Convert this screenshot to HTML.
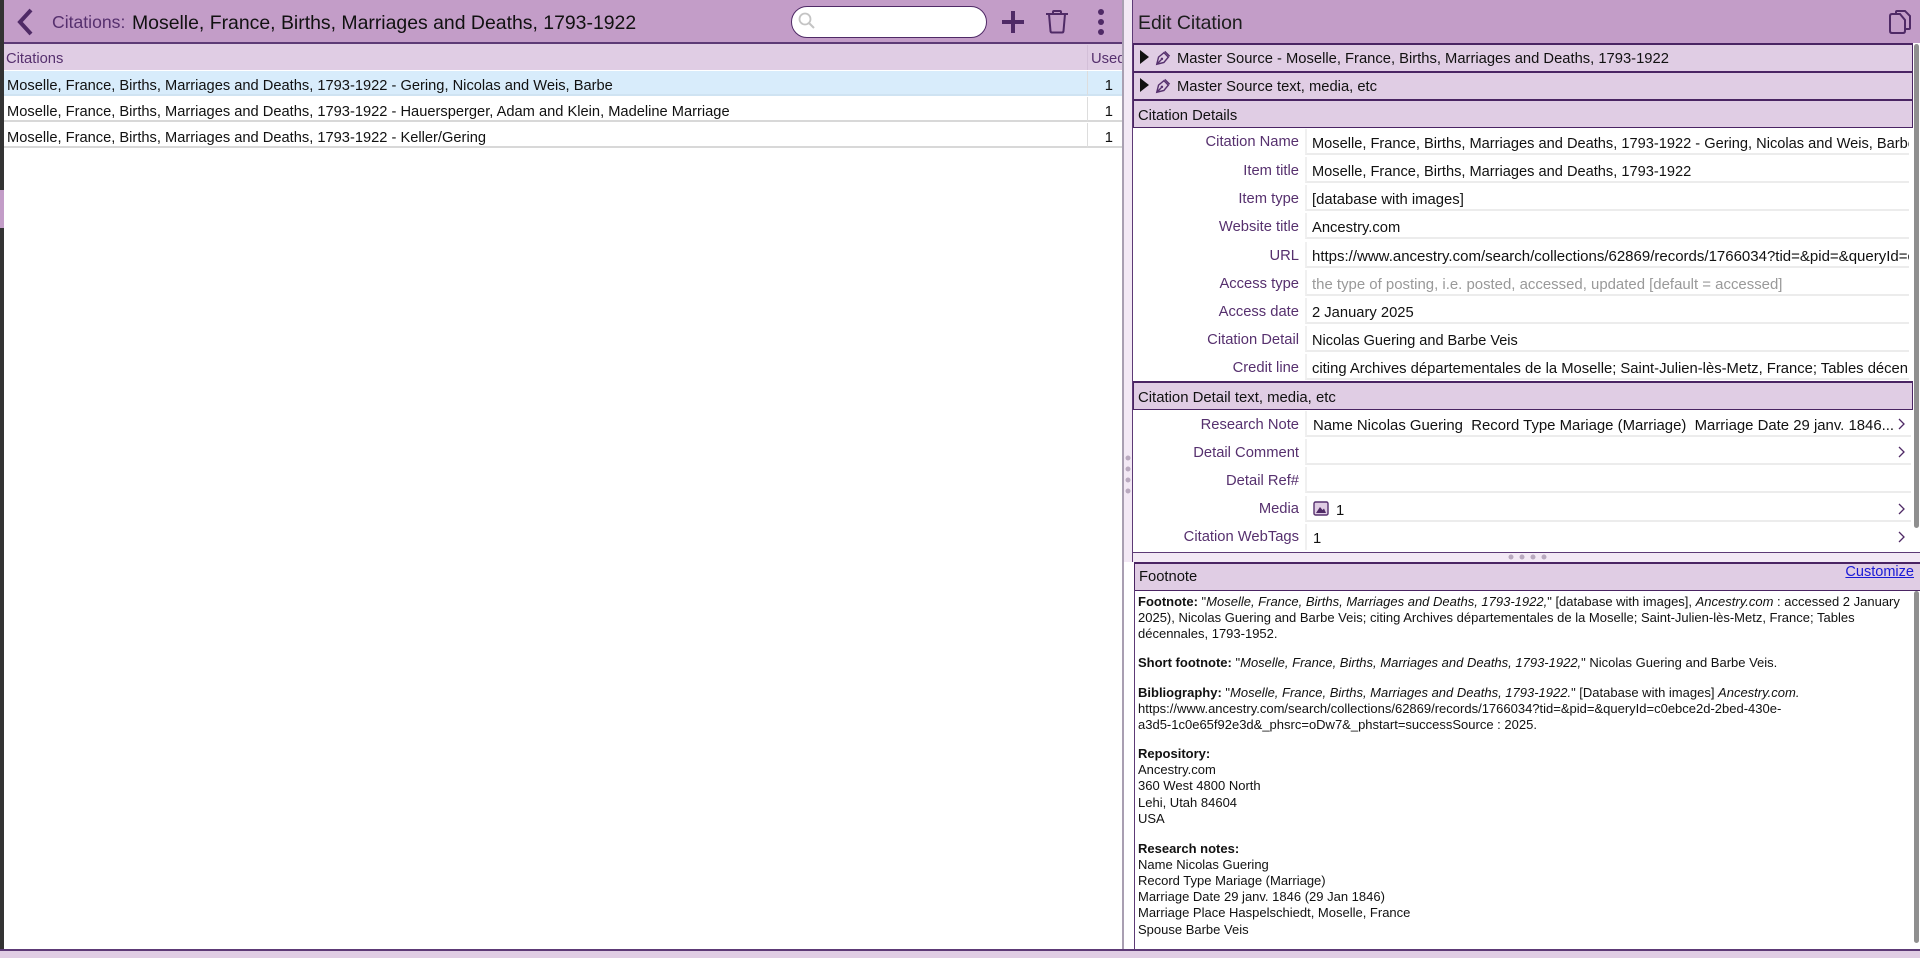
<!DOCTYPE html>
<html><head><meta charset="utf-8"><title>Edit Citation</title>
<style>
html,body{margin:0;padding:0;width:1920px;height:958px;overflow:hidden;background:#fff}
body{position:relative;font-family:"Liberation Sans",sans-serif;font-size:14.75px;color:#111}
div,a,svg,span.a{position:absolute;white-space:nowrap}
.hdr{background:#c39dc8}
.sec{left:1133px;width:778px;height:26px;background:#e0cde4;border:solid #4a2463;border-width:2px 1px 0 1px;line-height:26px;box-sizing:content-box}
.row{left:4px;width:1083px;height:25px;line-height:30px;padding-left:3px;box-sizing:border-box;border-bottom:2px solid #d8d8d8;font-size:14.66px}
.used{left:1087px;width:35px;height:25px;line-height:30px;text-align:right;padding-right:9px;box-sizing:border-box;border-left:1px solid #ddd;border-bottom:2px solid #d8d8d8}
.lab{left:1134px;width:165px;text-align:right;color:#56306e;height:20px;line-height:22px}
.val{left:1305px;width:604px;height:26px;line-height:30px;padding-left:5px;box-sizing:border-box;border-left:2px solid #f0f0f0;border-bottom:2px solid #ececec;overflow:hidden}
.chev{left:1895px;width:12px;height:14px}
.note{left:1138px;font-size:13px;line-height:16.2px;color:#111}
</style></head><body>
<div style="left:0;top:0;width:4px;height:958px;background:#333"></div>
<div style="left:0;top:190px;width:4px;height:38px;background:#c39dc8"></div>

<div class="hdr" style="left:4px;top:0;width:1118px;height:43px"></div>
<div class="hdr" style="left:1133px;top:0;width:787px;height:43px"></div>
<div style="left:4px;top:42px;width:1118px;height:2px;background:#5d3a76"></div>
<div style="left:1122px;top:0;width:2px;height:949px;background:#a99fb2"></div>
<div style="left:1124px;top:0;width:8px;height:562px;background:#f3e9f5"></div>
<div style="left:1132px;top:0;width:1px;height:562px;background:#5d3a76"></div>

<svg style="left:14px;top:8px" width="22" height="28" viewBox="0 0 22 28"><path d="M17 2 L6 14 L17 26" fill="none" stroke="#4f2a66" stroke-width="4"/></svg>
<div style="left:52px;top:10px;font-size:17.6px;line-height:25px;color:#56306e">Citations:</div>
<div style="left:132px;top:9px;font-size:19.43px;line-height:28px;color:#111">Moselle, France, Births, Marriages and Deaths, 1793-1922</div>

<div style="left:791px;top:6px;width:194px;height:30px;background:#fff;border:1px solid #4f2a66;border-radius:16px"></div>
<svg style="left:797px;top:11px" width="20" height="20" viewBox="0 0 20 20"><circle cx="8" cy="8" r="5.5" fill="none" stroke="#c4c4c4" stroke-width="1.8"/><path d="M12 12 L17 17" stroke="#c4c4c4" stroke-width="2"/></svg>
<svg style="left:1002px;top:11px" width="22" height="22" viewBox="0 0 22 22"><path d="M11 0 V22 M0 11 H22" stroke="#4f2a66" stroke-width="4"/></svg>
<svg style="left:1045px;top:9px" width="24" height="25" viewBox="0 0 24 25"><path d="M1 5 H23 M8 5 V3 Q8 2 9 2 H15 Q16 2 16 3 V5 M4 5 L5.5 22 Q5.6 23.5 7 23.5 H17 Q18.4 23.5 18.5 22 L20 5" fill="none" stroke="#4f2a66" stroke-width="2"/></svg>
<svg style="left:1095px;top:8px" width="12" height="28" viewBox="0 0 12 28"><circle cx="6" cy="4" r="3" fill="#4f2a66"/><circle cx="6" cy="14" r="3" fill="#4f2a66"/><circle cx="6" cy="24" r="3" fill="#4f2a66"/></svg>

<div style="left:4px;top:44px;width:1118px;height:26px;background:#e0cde4"></div>
<div style="left:6px;top:46px;line-height:27px;color:#56306e">Citations</div>
<div style="left:1087px;top:45px;width:35px;height:25px;border-left:1px solid #d3bfd8;box-sizing:border-box;overflow:hidden;line-height:28px;color:#56306e;padding-left:3px">Used</div>

<div class="row" style="top:71px;background:#d8ecfb;border-bottom:2px solid #cfe3f2">Moselle, France, Births, Marriages and Deaths, 1793-1922 - Gering, Nicolas and Weis, Barbe</div>
<div class="used" style="top:71px;background:#d8ecfb;border-bottom:2px solid #cfe3f2">1</div>
<div class="row" style="top:97px">Moselle, France, Births, Marriages and Deaths, 1793-1922 - Hauersperger, Adam and Klein, Madeline Marriage</div>
<div class="used" style="top:97px">1</div>
<div class="row" style="top:123px">Moselle, France, Births, Marriages and Deaths, 1793-1922 - Keller/Gering</div>
<div class="used" style="top:123px">1</div>

<!-- Right header -->
<div style="left:1138px;top:9px;font-size:19.43px;line-height:28px;color:#1d1d1d">Edit Citation</div>
<svg style="left:1888px;top:9px" width="24" height="26" viewBox="0 0 24 26"><path d="M8 5 V3 Q8 2 9 2 H17 L22 7 V19 Q22 20 21 20 H17 M7 5 H4 Q2 5 2 7 V22 Q2 24 4 24 H15 Q17 24 17 22 V11 L12 5 Z" fill="none" stroke="#4f2a66" stroke-width="2"/></svg>

<!-- Sections -->
<div class="sec" style="top:43px"></div>
<div class="sec" style="top:71px"></div>
<div class="sec" style="top:99px;border-bottom-width:1px"></div>
<svg style="left:1140px;top:50px" width="9" height="14" viewBox="0 0 9 14"><path d="M0 0 L9 7 L0 14 Z" fill="#111"/></svg>
<svg style="left:1140px;top:78px" width="9" height="14" viewBox="0 0 9 14"><path d="M0 0 L9 7 L0 14 Z" fill="#111"/></svg>
<svg style="left:1155px;top:50px" width="16" height="16" viewBox="0 0 18 18"><path d="M2 16 L4 8 L10 3 L15 8 L10 14 Z M2 16 L7 11 M11 1.5 L16.5 7" fill="none" stroke="#56306e" stroke-width="1.6"/><circle cx="7.8" cy="10" r="1.4" fill="#56306e"/></svg>
<svg style="left:1155px;top:78px" width="16" height="16" viewBox="0 0 18 18"><path d="M2 16 L4 8 L10 3 L15 8 L10 14 Z M2 16 L7 11 M11 1.5 L16.5 7" fill="none" stroke="#56306e" stroke-width="1.6"/><circle cx="7.8" cy="10" r="1.4" fill="#56306e"/></svg>
<div style="left:1177px;top:46px;line-height:26px">Master Source - Moselle, France, Births, Marriages and Deaths, 1793-1922</div>
<div style="left:1177px;top:74px;line-height:26px">Master Source text, media, etc</div>
<div style="left:1138px;top:103px;line-height:27px">Citation Details</div>

<!-- Fields -->
<div class="lab" style="top:131px">Citation Name</div><div class="val" style="top:129px;font-size:14.62px">Moselle, France, Births, Marriages and Deaths, 1793-1922 - Gering, Nicolas and Weis, Barbe</div>
<div class="lab" style="top:160px">Item title</div><div class="val" style="top:157px;font-size:14.62px">Moselle, France, Births, Marriages and Deaths, 1793-1922</div>
<div class="lab" style="top:188px">Item type</div><div class="val" style="top:185px;font-size:14.85px">[database with images]</div>
<div class="lab" style="top:216px">Website title</div><div class="val" style="top:213px">Ancestry.com</div>
<div class="lab" style="top:245px">URL</div><div class="val" style="top:242px;font-size:15px">https://www.ancestry.com/search/collections/62869/records/1766034?tid=&amp;pid=&amp;queryId=c0ebce2d</div>
<div class="lab" style="top:273px">Access type</div><div class="val" style="top:270px;color:#999;font-size:14.95px">the type of posting, i.e. posted, accessed, updated [default = accessed]</div>
<div class="lab" style="top:301px">Access date</div><div class="val" style="top:298px">2 January 2025</div>
<div class="lab" style="top:329px">Citation Detail</div><div class="val" style="top:326px;font-size:14.53px">Nicolas Guering and Barbe Veis</div>
<div class="lab" style="top:357px">Credit line</div><div class="val" style="top:354px;font-size:14.8px">citing Archives départementales de la Moselle; Saint-Julien-lès-Metz, France; Tables décennales</div>

<div class="sec" style="top:381px;border-bottom-width:1px"></div>
<div style="left:1138px;top:385px;line-height:27px;font-size:14.9px">Citation Detail text, media, etc</div>

<div class="lab" style="top:414px">Research Note</div><div class="val" style="top:411px;width:606px;padding-left:6px;font-size:14.92px">Name Nicolas Guering&nbsp; Record Type Mariage (Marriage)&nbsp; Marriage Date 29 janv. 1846...</div>
<div class="lab" style="top:442px">Detail Comment</div><div class="val" style="top:439px;width:606px"></div>
<div class="lab" style="top:470px">Detail Ref#</div><div class="val" style="top:467px;width:606px"></div>
<div class="lab" style="top:498px">Media</div><div class="val" style="top:496px;width:606px;padding-left:29px">1</div>
<div class="lab" style="top:526px">Citation WebTags</div><div class="val" style="top:524px;width:606px;border-bottom:0;padding-left:6px">1</div>
<svg style="left:1313px;top:501px" width="16" height="15" viewBox="0 0 16 15"><rect x="1" y="1" width="14" height="13" rx="1.5" fill="#e0cde4" stroke="#56306e" stroke-width="1.4"/><path d="M3 12 L7 6 L9.5 9 L11 7.5 L13 12 Z" fill="#4f2a66"/></svg>
<svg class="chev" style="top:417px" viewBox="0 0 12 14"><path d="M4 2 L9 7 L4 12" fill="none" stroke="#4f2a66" stroke-width="1.3"/></svg>
<svg class="chev" style="top:445px" viewBox="0 0 12 14"><path d="M4 2 L9 7 L4 12" fill="none" stroke="#4f2a66" stroke-width="1.3"/></svg>
<svg class="chev" style="top:502px" viewBox="0 0 12 14"><path d="M4 2 L9 7 L4 12" fill="none" stroke="#4f2a66" stroke-width="1.3"/></svg>
<svg class="chev" style="top:530px" viewBox="0 0 12 14"><path d="M4 2 L9 7 L4 12" fill="none" stroke="#4f2a66" stroke-width="1.3"/></svg>

<!-- Scrollbars -->
<div style="left:1914px;top:44px;width:5px;height:484px;background:#8f8f8f;border-radius:3px"></div>
<div style="left:1914px;top:591px;width:5px;height:352px;background:#8f8f8f;border-radius:3px"></div>

<!-- Splitter dots, vertical -->
<svg style="left:1124px;top:453px" width="8" height="46"><circle cx="4" cy="5" r="2.5" fill="#b9a9bf"/><circle cx="4" cy="16" r="2.5" fill="#b9a9bf"/><circle cx="4" cy="27" r="2.5" fill="#b9a9bf"/><circle cx="4" cy="38" r="2.5" fill="#b9a9bf"/></svg>
<!-- Horizontal splitter -->
<div style="left:1133px;top:552px;width:787px;height:10px;background:#f3e9f5;border-top:1px solid #5d3a76;box-sizing:border-box"></div>
<svg style="left:1503px;top:552px" width="46" height="10"><circle cx="8" cy="5" r="2.5" fill="#b9a9bf"/><circle cx="19" cy="5" r="2.5" fill="#b9a9bf"/><circle cx="30" cy="5" r="2.5" fill="#b9a9bf"/><circle cx="41" cy="5" r="2.5" fill="#b9a9bf"/></svg>

<!-- Footnote -->
<div style="left:1134px;top:562px;width:785px;height:26px;background:#e0cde4;border:solid #4a2463;border-width:2px 1px 1px 1px"></div>
<div style="left:1139px;top:564px;line-height:27px">Footnote</div>
<a style="right:6px;top:562px;line-height:20px;color:#1a1ad6;text-decoration:underline;font-size:14.53px">Customize</a>
<div style="left:1134px;top:590px;width:1px;height:359px;background:#5d3a76"></div>

<div class="note" style="top:594px"><b>Footnote:</b> "<i>Moselle, France, Births, Marriages and Deaths, 1793-1922,</i>" [database with images], <i>Ancestry.com</i> : accessed 2 January<br>2025), Nicolas Guering and Barbe Veis; citing Archives départementales de la Moselle; Saint-Julien-lès-Metz, France; Tables<br>décennales, 1793-1952.</div>
<div class="note" style="top:655px"><b>Short footnote:</b> "<i>Moselle, France, Births, Marriages and Deaths, 1793-1922,</i>" Nicolas Guering and Barbe Veis.</div>
<div class="note" style="top:684.5px"><b>Bibliography:</b> "<i>Moselle, France, Births, Marriages and Deaths, 1793-1922.</i>" [Database with images] <i>Ancestry.com.</i><br>https://www.ancestry.com/search/collections/62869/records/1766034?tid=&amp;pid=&amp;queryId=c0ebce2d-2bed-430e-<br>a3d5-1c0e65f92e3d&amp;_phsrc=oDw7&amp;_phstart=successSource : 2025.</div>
<div class="note" style="top:746px"><b>Repository:</b><br>Ancestry.com<br>360 West 4800 North<br>Lehi, Utah 84604<br>USA</div>
<div class="note" style="top:840.5px"><b>Research notes:</b><br>Name Nicolas Guering<br>Record Type Mariage (Marriage)<br>Marriage Date 29 janv. 1846 (29 Jan 1846)<br>Marriage Place Haspelschiedt, Moselle, France<br>Spouse Barbe Veis</div>

<!-- Bottom bar -->
<div style="left:0;top:949px;width:1920px;height:9px;background:#e0cde4;border-top:2px solid #5d3a76;box-sizing:border-box"></div>
</body></html>
